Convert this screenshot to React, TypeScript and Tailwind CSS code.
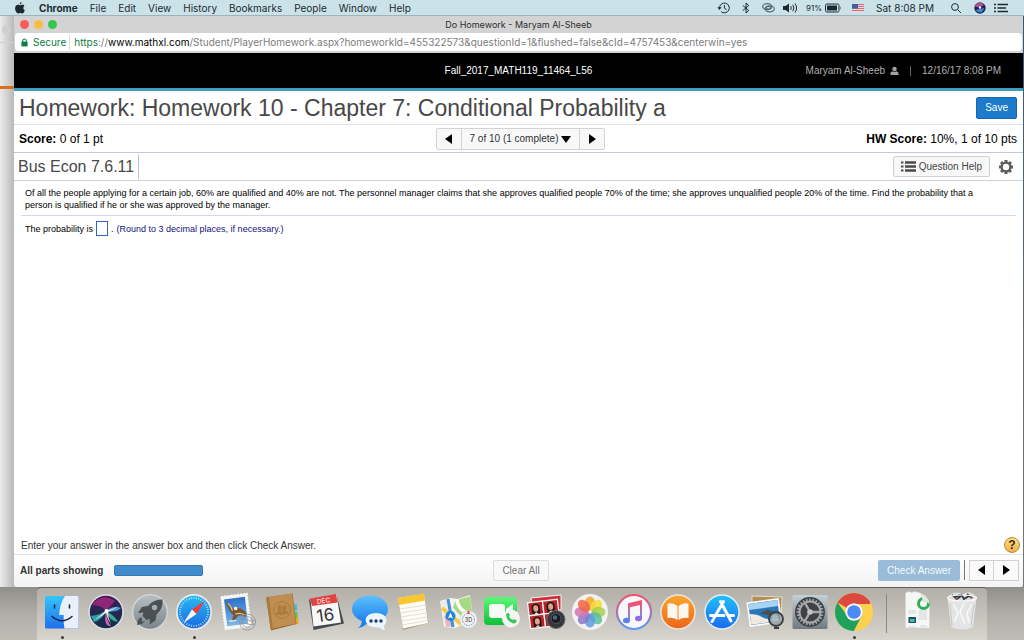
import type { ReactNode } from "react";

const menus = ["File", "Edit", "View", "History", "Bookmarks", "People", "Window", "Help"];

function AppleLogo() {
  return (
    <svg viewBox="0 0 20 24" className="h-3 w-[10px] fill-[#1d2b30]" aria-hidden="true">
      <path d="M13.2 0c.2 2.2-1.700 4.700-3.900 4.800C9 2.600 11.200.3 13.200 0zM18.900 8.200c-3.300 2-2.900 6.700.8 8.200-.9 2.600-3 6.600-5.200 6.600-1.500 0-2.200-1-4-1s-2.600 1-4 1C3.500 23-.2 16.500.2 11.800c.4-4 3.100-6.200 5.800-6.200 1.800 0 3 1.100 4.400 1.100 1.300 0 2.600-1.300 4.900-1.200 1.500.1 2.800.9 3.600 2.700z" />
    </svg>
  );
}

function MenuBar() {
  return (
    <header className="flex h-4 items-center justify-between border-b border-[#9fb4ba] bg-[#cbe2e9] pr-4 pl-[15px] font-['Inter',sans-serif] text-[10px] leading-[14px] text-[#1b2a30]">
      <nav className="flex items-center gap-3">
        <a href="#apple" aria-label="Apple" className="pr-[2px]">
          <AppleLogo />
        </a>
        <a href="#chrome" className="font-bold">Chrome</a>
        {menus.map((m) => (
          <a key={m} href={"#" + m.toLowerCase()}>{m}</a>
        ))}
      </nav>
      <div className="flex items-center">
        <svg viewBox="0 0 13 12" className="mr-3 h-3 w-[13px] fill-none stroke-[#1d2b30]" aria-hidden="true">
          <path d="M2.500 6a4.900 4.900 0 1 1 1.600 3.600M7.400 3v3.200l2.200 1.500" />
          <path d="M.3 5.200h4.300L2.500 8z" className="fill-[#1d2b30] stroke-none" />
        </svg>
        <svg viewBox="0 0 8 12" className="mr-3 h-3 w-2 fill-none stroke-[#1d2b30]" aria-hidden="true">
          <path d="M.8 3.500l6 5L4 11V1l2.800 2.500-6 5" />
        </svg>
        <svg viewBox="0 0 13 12" className="mr-2 h-3 w-[13px] fill-none stroke-[#5b6c72]" strokeWidth="1.200" aria-hidden="true">
          <ellipse cx="5.300" cy="4.600" rx="4.600" ry="3" />
          <ellipse cx="7.700" cy="6.800" rx="4.600" ry="3" />
          <ellipse cx="6.500" cy="5.700" rx="2.500" ry="1.400" />
        </svg>
        <svg viewBox="0 0 15 12" className="mr-2 h-3 w-[15px]" aria-hidden="true">
          <path d="M0 4h2.500L6 1.500v9L2.500 8H0z" className="fill-[#1d2b30]" />
          <path d="M7.700 4.200q1.200 1.800 0 3.600M9.800 2.800q2.200 3.200 0 6.400M12 1.500q3.200 4.500 0 9" className="fill-none stroke-[#1d2b30]" />
        </svg>
        <span className="mr-[3px] text-[8px]">91%</span>
        <svg viewBox="0 0 17 10" className="mr-[10px] h-[10px] w-[17px]" aria-hidden="true">
          <rect x=".5" y="1" width="13.500" height="8" rx="1.500" className="fill-none stroke-[#1d2b30]" />
          <rect x="2" y="2.500" width="10" height="5" className="fill-[#1d2b30]" />
          <path d="M15 3.500q1.500 1.500 0 3z" className="fill-[#1d2b30]" />
        </svg>
        <svg viewBox="0 0 12 8" className="mr-3 h-2 w-3" aria-hidden="true">
          <rect width="12" height="8" fill="#eadbe0" />
          <path d="M0 .5h12M0 2.500h12M0 4.500h12M0 6.500h12" stroke="#c86a78" />
          <rect width="6" height="4.500" fill="#42609b" />
        </svg>
        <span className="mr-4">Sat 8:08 PM</span>
        <svg viewBox="0 0 12 12" className="mr-3 h-3 w-3 fill-none stroke-[#1d2b30]" aria-hidden="true">
          <circle cx="5" cy="5" r="3.400" />
          <path d="M7.500 7.500l3.500 3.500" />
        </svg>
        <svg viewBox="0 0 12 12" className="mr-2 h-3 w-3" aria-hidden="true">
          <circle cx="6" cy="6" r="5.700" fill="#252250" />
          <path d="M1 5a5 5 0 0 1 9-2L6 5z" fill="#b34c9c" />
          <path d="M1.500 8q4-1 9-2l-3 4.500q-4 0-6-2.500z" fill="#3b8bd0" />
          <circle cx="6" cy="5.500" r="1.200" fill="#fff" />
        </svg>
        <svg viewBox="0 0 14 10" className="h-[10px] w-[14px] stroke-[#1d2b30]" strokeWidth="1.500" aria-hidden="true">
          <path d="M0 1.500h2M3.500 1.500H14M0 5h2M3.500 5H12M0 8.500h2M3.500 8.500H14" />
        </svg>
      </div>
    </header>
  );
}

function Triangle({ dir }: { dir: "left" | "right" | "down" }) {
  const d = dir === "left" ? "M8 0v10L1 5z" : dir === "right" ? "M2 0v10l7-5z" : "M0 2h10L5 9z";
  return (
    <svg viewBox="0 0 10 10" className="h-[10px] w-[10px] shrink-0 fill-black" aria-hidden="true">
      <path d={d} />
    </svg>
  );
}

function Gear() {
  return (
    <svg viewBox="0 0 16 16" className="h-4 w-4" aria-hidden="true">
      <g stroke="#5d5d5d" fill="none">
        <circle cx="8" cy="8" r="4.400" strokeWidth="2.400" />
        <path
          d="M8 1v2M8 13v2M1 8h2M13 8h2M3.050 3.050l1.400 1.400M11.550 11.550l1.400 1.400M3.050 12.950l1.400-1.400M11.550 4.450l1.400-1.400"
          strokeWidth="3"
        />
      </g>
    </svg>
  );
}

function BrowserChrome() {
  return (
    <div className="bg-[#d3d3d3] pb-[2px] font-['Inter',sans-serif] text-[10px]">
      <div className="grid h-[17px] grid-cols-[1fr_auto_1fr] items-center px-[6px]">
        <div className="flex gap-[5px]">
          <button aria-label="Close" className="h-[9px] w-[9px] rounded-full bg-[#fc5b57]" />
          <button aria-label="Minimize" className="h-[9px] w-[9px] rounded-full bg-[#fdbc40]" />
          <button aria-label="Zoom" className="h-[9px] w-[9px] rounded-full bg-[#34c84a]" />
        </div>
        <p className="text-[9px] text-[#2d2d2d]">Do Homework - Maryam Al-Sheeb</p>
      </div>
      <div className="mx-px flex h-[18px] items-center rounded-sm bg-white pl-[6px] text-[#7c7c7c]">
        <svg viewBox="0 0 8 10" className="mr-[5px] h-[9px] w-[7px]" aria-hidden="true">
          <rect x=".5" y="4" width="7" height="5.500" fill="#0b8043" />
          <path d="M2 4.500V3a2 2 0 0 1 4 0v1.500" fill="none" stroke="#0b8043" strokeWidth="1.200" />
        </svg>
        <span className="mr-1 border-r border-[#dadada] pr-[3px] text-[#0b8043]">Secure</span>
        <span className="truncate">
          <span className="text-[#0b8043]">https</span>://<span className="text-black">www.mathxl.com</span>
          /Student/PlayerHomework.aspx?homeworkId=455322573&amp;questionId=1&amp;flushed=false&amp;cId=4757453&amp;centerwin=yes
        </span>
      </div>
    </div>
  );
}

function CourseBar() {
  return (
    <div className="grid h-[38px] grid-cols-[1fr_auto_1fr] items-center border-b-[3px] border-[#3f9dc0] bg-black pr-[22px] pl-[22px] text-[10px]">
      <span />
      <p className="text-white">Fall_2017_MATH119_11464_L56</p>
      <div className="flex items-center justify-end text-[#b0b0b0]">
        <span>Maryam Al-Sheeb</span>
        <svg viewBox="0 0 10 10" className="ml-[5px] h-[10px] w-[9px] fill-[#a3a3a3]" aria-hidden="true">
          <circle cx="5" cy="2.700" r="2.500" />
          <path d="M.5 9.500V7.500Q.8 5.500 3 5.200q2 1.300 4 0 2.200.3 2.500 2.300v2z" />
        </svg>
        <span className="mx-[11px] h-[10px] w-px bg-[#6a6158]" />
        <time>12/16/17 8:08 PM</time>
      </div>
    </div>
  );
}

function Homework() {
  return (
    <main className="flex flex-1 flex-col bg-white">
      <div className="flex h-[34px] items-center justify-between border-b border-[#dfe0e8] pr-[6px] pl-[5px]">
        <h1 className="text-[23px] leading-[30px] whitespace-nowrap text-[#484848]">
          Homework: Homework 10 - Chapter 7: Conditional Probability a
        </h1>
        <button className="h-[22px] rounded-xs border border-[#1767ae] bg-[#1c7bcb] px-2 text-[10px] leading-[18px] text-white">
          Save
        </button>
      </div>

      <div className="grid h-7 grid-cols-[1fr_auto_1fr] items-center border-b border-[#c3c7d8] pr-px pl-[5px] text-[12px]">
        <p>
          <b>Score:</b> 0 of 1 pt
        </p>
        <div className="flex h-[22px] items-stretch rounded-xs border border-[#d3d3d3] bg-[#f8f8f8] text-[10px] text-[#333]">
          <button aria-label="Previous question" className="flex w-6 items-center justify-center">
            <Triangle dir="left" />
          </button>
          <button className="flex items-center gap-[3px] border-x border-[#d3d3d3] px-2">
            7 of 10 (1 complete)
            <Triangle dir="down" />
          </button>
          <button aria-label="Next question" className="flex w-6 items-center justify-center">
            <Triangle dir="right" />
          </button>
        </div>
        <p className="pr-[5px] text-right">
          <b>HW Score:</b> 10%, 1 of 10 pts
        </p>
      </div>

      <div className="flex h-7 items-center justify-between border-b border-[#cdcfe0] pr-[9px] pl-1">
        <h2 className="border-r border-[#bdc2d4] pr-1 text-[16px] leading-[25px] text-[#484848]">Bus Econ 7.6.11</h2>
        <div className="flex items-center gap-2">
          <button className="flex h-[21px] items-center gap-[3px] rounded-xs border border-[#cfcfcf] bg-[#f8f8f8] px-[7px] text-[10px] text-[#444]">
            <svg viewBox="0 0 15 11" className="h-[11px] w-[15px] stroke-[#4a4a4a]" aria-hidden="true">
              <path d="M0 1.500h2.500M0 5.500h2.500M0 9.500h2.500" strokeWidth="2" />
              <path d="M4 1.500h11M4 5.500h11M4 9.500h11" strokeWidth="2.600" />
            </svg>
            Question Help
          </button>
          <button aria-label="Settings">
            <Gear />
          </button>
        </div>
      </div>

      <section className="px-[7px] text-[9px] leading-3 text-black">
        <p className="border-b border-[#d6d8e6] pt-[6px] pr-4 pb-1 pl-1">
          Of all the people applying for a certain job, 60% are qualified and 40% are not. The personnel manager claims
          that she approves qualified people 70% of the time; she approves unqualified people 20% of the time. Find the
          probability that a person is qualified if he or she was approved by the manager.
        </p>
        <div className="flex items-center px-1 pt-[5px]">
          <label htmlFor="answer">The probability is</label>
          <input id="answer" type="text" className="mx-[3px] h-[15px] w-3 border border-[#2f66c4] bg-white" />
          <span>.</span>
          <span className="ml-[3px] text-[#12127c]">(Round to 3 decimal places, if necessary.)</span>
        </div>
      </section>

      <div className="mt-auto flex h-[21px] items-center justify-between border-b border-[#e3e3ec] pt-[2px] pr-[3px] pl-[7px] text-[10px] text-[#333]">
        <p>Enter your answer in the answer box and then click Check Answer.</p>
        <button
          aria-label="Help"
          className="flex h-4 w-4 items-center justify-center rounded-full border border-[#b58a35] bg-linear-to-b from-[#ffe08a] to-[#efb043] text-[12px] leading-3 font-bold text-[#3a2a10]"
        >
          ?
        </button>
      </div>

      <footer className="grid h-8 grid-cols-[1fr_auto_1fr] items-center bg-linear-to-b from-white to-[#f3f3f3] pr-px pb-[2px] pl-[6px] text-[10px]">
        <div className="flex items-center gap-[11px]">
          <b className="text-[#333]">All parts showing</b>
          <div role="progressbar" aria-label="Progress" className="h-[11px] w-[89px] rounded-xs border border-[#3478b8] bg-[#428bca]" />
        </div>
        <button className="h-[21px] rounded-xs border border-[#dcdcdc] bg-[#f8f8f8] px-2 text-[#757575]">Clear All</button>
        <div className="flex items-center justify-end pr-[3px]">
          <button className="h-[21px] rounded-xs bg-[#9abcd8] px-[9px] text-[#f4f9fc]">Check Answer</button>
          <span className="mx-1 h-5 w-px bg-[#777]" />
          <div className="flex h-[21px] border border-[#d0d0d0] bg-[#fafafa]">
            <button aria-label="Previous part" className="flex w-6 items-center justify-center border-r border-[#d0d0d0]">
              <Triangle dir="left" />
            </button>
            <button aria-label="Next part" className="flex w-6 items-center justify-center">
              <Triangle dir="right" />
            </button>
          </div>
        </div>
      </footer>
    </main>
  );
}

const petals = ["#f7a528", "#f4dc3a", "#a8cf4a", "#5bbf9a", "#5a9fe0", "#8a78cc", "#cf78b4", "#f0654a"];
const teeth = Array.from({ length: 24 }, (_, i) => i * 15);
const ticks = Array.from({ length: 36 }, (_, i) => i * 10);

const dockApps: { name: string; running?: boolean; art: ReactNode }[] = [
  {
    name: "Finder",
    running: true,
    art: (
      <>
        <rect x="5" y="6" width="33.500" height="32.500" rx="1.500" fill="url(#finderBlue)" />
        <path d="M25 6h12q1.500 0 1.500 1.500V37q0 1.500-1.500 1.500H24.500q-1-4.500-.8-9.500v-4h-4.500Q19.500 14 25 6z" fill="#e9f0f8" />
        <path d="M14.500 15v3M29.500 15v3" stroke="#132743" strokeWidth="1.500" strokeLinecap="round" />
        <path d="M12 26.500q10 8.500 20 0" fill="none" stroke="#132743" strokeWidth="1.500" strokeLinecap="round" />
      </>
    ),
  },
  {
    name: "Siri",
    art: (
      <>
        <circle cx="22" cy="22" r="17.800" fill="#dcdbe2" />
        <circle cx="22" cy="22" r="16.200" fill="url(#siriBg)" />
        <path d="M8 15Q18 2 31 11L22 21Q18 15 8 15z" fill="#a9277e" opacity=".8" />
        <path d="M7 26q9-1 15-5-4 9-12 11z" fill="#2fb8b0" opacity=".85" />
        <path d="M22 21q7-6 15-3-5 5-15 3z" fill="#56b5e8" opacity=".85" />
        <path d="M22 21q8 4 12 11-9-1-12-11z" fill="#41c9a8" opacity=".8" />
        <path d="M22 21q0 9 5 15-8 1-5-15z" fill="#ea6cb7" opacity=".9" />
        <path d="M7 23q9 2 15-2 7-2 13-5-8 5-11 6 0 6 3 12-4-5-5-11-7 5-12 7 6-4 10-8-6 3-13 1z" fill="#fff" opacity=".8" />
        <circle cx="22.500" cy="21" r="2" fill="#fff" />
      </>
    ),
  },
  {
    name: "Launchpad",
    art: (
      <>
        <circle cx="22" cy="22" r="18" fill="#d4d8da" />
        <circle cx="22" cy="22" r="16.700" fill="url(#rocketBg)" />
        <path d="M34.500 9.500q-9-.5-14.500 6.500l-6 1-4 6 5.500-.5-1 3.500 4 4 3.500-1-.5 5.500 6-4 1-6q7-6 6-15z" fill="#4b5053" />
        <circle cx="26.500" cy="17.500" r="2.700" fill="#a4adb1" />
        <path d="M13.500 27q-4 1-4.500 8 6-.5 8-4.500l-3 1.500z" fill="#4b5053" />
      </>
    ),
  },
  {
    name: "Safari",
    running: true,
    art: (
      <>
        <circle cx="22" cy="22" r="18" fill="#e7e9ec" />
        <circle cx="22" cy="22" r="16.300" fill="url(#safariBg)" />
        {ticks.map((a) => (
          <path key={a} d="M22 7v2" stroke="#d9f0fc" strokeWidth=".7" transform={`rotate(${a} 22 22)`} />
        ))}
        <path d="M33 10.500L24.500 24l-4.500-4.500z" fill="#ef3e36" />
        <path d="M11.500 33L20 19.500l4.500 4.500z" fill="#f5f5f5" />
      </>
    ),
  },
  {
    name: "Mail",
    art: (
      <>
        <g transform="rotate(-7 20 21)">
          <rect x="7" y="5" width="26" height="33" fill="#f5f5f4" stroke="#fbfbfb" strokeDasharray="2 1.200" strokeWidth="1.500" />
          <rect x="9.500" y="8" width="21" height="27" fill="url(#skyBg)" />
          <path d="M11.500 11q4 2 5 8 2-2 5-1 5 1 8.500 6l-1.500 4q-4-3-7-2-2 3-6 5-1-3 1.500-6-5-5-5.500-14z" fill="#7a5530" />
          <path d="M13 12.500q3 4 3.500 8M19 24q5-1 9 2" stroke="#dcc59c" strokeWidth="1.200" fill="none" />
          <circle cx="20" cy="18.500" r="1.800" fill="#f6efe2" />
          <path d="M12 30q4 1 7 0" stroke="#f2f2ee" strokeWidth="1.500" />
        </g>
        <g fill="none" stroke="#8c8c8c" opacity=".75">
          <circle cx="31.500" cy="32" r="8" />
          <circle cx="31.500" cy="32" r="5.300" />
          <path d="M24 30q4-2 8 0t7 0M24 34q4-2 8 0t7 0" />
        </g>
      </>
    ),
  },
  {
    name: "Contacts",
    art: (
      <>
        <path d="M34 14l3 .5v6l-3 .3z" fill="#49b7d6" />
        <path d="M34 22l3.500 0v6l-3 .5z" fill="#56c256" />
        <path d="M34.500 28.500l4-.5v6l-4 .5z" fill="#f0a52c" />
        <path d="M6 7.500L32.500 3.500l4 30.500L11 40.500z" fill="#99692e" />
        <path d="M6.500 7L32 3.500l4 30-25.500 5.500z" fill="#c08f50" />
        <path d="M6.500 7l2.500-.4 4 31.900-2.500.5z" fill="#aa7a3d" />
        <circle cx="22" cy="20" r="8.500" fill="none" stroke="#a87a3f" />
        <path d="M16 25q0-3 2.500-4-2.500-5 1-6 4 .5 1.500 6 3 1 3 4zM22 24q0-2 1-3-2-5 1.500-6 3.500 1 1 5.500 3 1 3 3.500z" fill="#ab7c41" />
      </>
    ),
  },
  {
    name: "Calendar",
    art: (
      <>
        <path d="M5 9.500L32.500 5l7.500 28.500L9.500 40z" fill="#454a50" />
        <path d="M6.500 9l26-4.500L37 32.500 9.500 36.500z" fill="#f8f8f8" />
        <path d="M6 8.500L32 4l1.500 8.500L8 16z" fill="#e24440" />
        <g transform="rotate(-8 21 22)" textAnchor="middle" className="font-['Inter',sans-serif]">
          <text x="21" y="13" fontSize="6.500" fill="#fff">DEC</text>
          <text x="21" y="31" fontSize="17" fill="#333">16</text>
        </g>
      </>
    ),
  },
  {
    name: "Messages",
    art: (
      <>
        <ellipse cx="22" cy="19" rx="18" ry="13.500" fill="url(#bubble)" />
        <path d="M14 30q0 5-4 8 7-1 10-6z" fill="#1c83ea" />
        <path d="M28 23q10 0 10.500 7.500-.5 4-3 5.500.5 3 2 4-3.500 0-6-2.500Q18 38 17.500 30 18.500 23 28 23z" fill="#edf5fc" />
        <circle cx="23" cy="31" r="1.700" fill="#1d3f78" />
        <circle cx="28" cy="31" r="1.700" fill="#1d3f78" />
        <circle cx="33" cy="31" r="1.700" fill="#1d3f78" />
      </>
    ),
  },
  {
    name: "Notes",
    art: (
      <>
        <path d="M6 8.500L32 4l4.500 29L11 40z" fill="#ad9d78" />
        <path d="M6 8L32 4l4 29-25 5.500z" fill="#fdfcf5" />
        <path d="M6 8L32 3.500l1 7-26 4.500z" fill="#f8c72f" />
        <path d="M7.500 19l26-4M8 23l26-4M8.500 27l26-4M9.500 31l25.500-4M10 35l25.500-4.500" stroke="#dcd9ce" strokeWidth=".8" />
      </>
    ),
  },
  {
    name: "Maps",
    art: (
      <>
        <path d="M4 11l10-3 8 1 12-4 4 29-11 1-8 3-11-1z" fill="#f5f2e9" />
        <path d="M5 12l9-2.500L16 23l-9 3z" fill="#e9ecee" />
        <path d="M20 10l14-3.500 3 23-11-2-9-10z" fill="#a5d982" />
        <path d="M21 9q1 13 16 15" stroke="#f8f8f4" strokeWidth="3.500" fill="none" />
        <path d="M6 18l19 16" stroke="#f3ca50" strokeWidth="4" />
        <path d="M8 26l8 1 2 9-8 1z" fill="#f3b4c2" />
        <path d="M12 9l5 28" stroke="#3d91de" strokeWidth="3" />
        <circle cx="14.500" cy="26" r="5" fill="#1e86dc" />
        <path d="M14.500 22.500l2.500 6-2.500-1.200-2.500 1.200z" fill="#fff" />
        <circle cx="32.500" cy="29.500" r="8.700" fill="#f0f1f2" stroke="#c8c9cb" strokeWidth=".6" />
        <circle cx="32.500" cy="29.500" r="6" fill="none" stroke="#7e95a5" strokeDasharray="1.500 1" />
        <text x="32.500" y="31.500" fontSize="5.500" textAnchor="middle" fill="#333" className="font-['Inter',sans-serif]">3D</text>
        <path d="M31.500 21h2v3h-2z" fill="#e2443b" />
      </>
    ),
  },
  {
    name: "FaceTime",
    art: (
      <>
        <rect x="4" y="7" width="33" height="28" rx="4" fill="url(#green)" />
        <rect x="9" y="14" width="16" height="14" rx="3" fill="#f7fbf7" />
        <path d="M26 19l7-5v13l-7-4z" fill="#f7fbf7" />
        <circle cx="31" cy="28.500" r="9" fill="#f3f4f3" />
        <path d="M26 24.500q2-3 4 .5-1.500 1.500 0 3t3 2q1.500-1.500 3.500.5 0 3-3 3-7-2-7.500-9z" fill="#37c858" />
      </>
    ),
  },
  {
    name: "Photo Booth",
    art: (
      <>
        <path d="M7 8l30-3v15H9z" fill="#cf2f35" stroke="#f5f3f0" />
        <g transform="rotate(-7 20 24)">
          {[0, 1].map((r) =>
            [0, 1].map((c) => (
              <g key={`${r}${c}`} transform={`translate(${5 + c * 15} ${11 + r * 13})`}>
                <rect width="15" height="13" fill="#b8252b" stroke="#f7f4f1" strokeWidth="1.300" />
                <path d="M3.500 12V4q4-5 8 0v8z" fill="#2a1718" />
                <ellipse cx="7.500" cy="6.500" rx="2.500" ry="3.200" fill="#dda58b" />
                <path d="M5.500 12q2-3 4 0z" fill="#eee" />
              </g>
            )),
          )}
        </g>
        <circle cx="32" cy="29.500" r="9" fill="#35373a" stroke="#6a6b6d" />
        <circle cx="32" cy="28.500" r="5" fill="#181a20" stroke="#55585f" />
        <circle cx="31" cy="27.500" r="2.200" fill="#526580" />
      </>
    ),
  },
  {
    name: "Photos",
    art: (
      <>
        <circle cx="22" cy="22" r="18" fill="#f3f2f0" />
        {petals.map((c, i) => (
          <ellipse key={c} cx="22" cy="13.500" rx="5.200" ry="7" fill={c} opacity=".85" transform={`rotate(${i * 45} 22 22)`} />
        ))}
      </>
    ),
  },
  {
    name: "iTunes",
    art: (
      <>
        <circle cx="22" cy="22" r="17" fill="#f8f8fb" stroke="url(#tunes)" strokeWidth="2.200" />
        <path d="M17 30.500V14l12-2.700V28.500" fill="none" stroke="url(#tunes)" strokeWidth="2" />
        <path d="M17 14l12-2.700v3.500l-12 2.700z" fill="#ee5474" />
        <ellipse cx="14.500" cy="30.500" rx="3.500" ry="2.800" fill="#5f7fe8" />
        <ellipse cx="26.500" cy="28.500" rx="3.500" ry="2.800" fill="#8f6fdd" />
      </>
    ),
  },
  {
    name: "iBooks",
    art: (
      <>
        <circle cx="22" cy="22" r="17.800" fill="#efe6da" />
        <circle cx="22" cy="22" r="16.300" fill="url(#orange)" />
        <path d="M21.500 16q-4-3.500-10-2.500v14.500q6-1 10 2zM22.500 16q4-3.500 10-2.500v14.500q-6-1-10 2z" fill="#fbf6ee" />
      </>
    ),
  },
  {
    name: "App Store",
    art: (
      <>
        <circle cx="22" cy="22" r="17.800" fill="#e8edf2" />
        <circle cx="22" cy="22" r="16.300" fill="url(#store)" />
        <path d="M23.500 11.500L14 28M20.500 11.500L31 31M10.500 25.500H24M28.500 25.500h5M13 30l-1 1.500" fill="none" stroke="#fff" strokeWidth="3" strokeLinecap="round" />
      </>
    ),
  },
  {
    name: "Preview",
    art: (
      <>
        <path d="M8 6l30 1-1 24-29-1z" fill="#b28e55" stroke="#e8decb" />
        <g transform="rotate(-8 20 24)">
          <rect x="5" y="11" width="31" height="23" fill="#2b74b7" stroke="#fafafa" strokeWidth="1.800" />
          <rect x="6" y="12" width="29" height="6" fill="#a8d3f1" />
          <path d="M6 22q7 1 12 5t17 4v2H6z" fill="#efe9df" />
          <path d="M16 23l8-3 6 4-5 2z" fill="#49504e" />
        </g>
        <circle cx="32" cy="29" r="7" fill="#8e9a9f" fillOpacity=".8" stroke="#3b3f41" strokeWidth="1.800" />
        <circle cx="31" cy="28" r="3.500" fill="#c6ced0" opacity=".6" />
        <path d="M30 37h5v2h-5z" fill="#3b3f41" />
      </>
    ),
  },
  {
    name: "System Preferences",
    art: (
      <>
        <rect x="4.500" y="5" width="35" height="34" rx="1.500" fill="url(#steel)" />
        <circle cx="22" cy="22" r="15" fill="#3f4245" />
        {teeth.map((a) => (
          <path key={a} d="M22 8.500v3" stroke="#a5a9ab" strokeWidth="1.500" transform={`rotate(${a} 22 22)`} />
        ))}
        <circle cx="22" cy="22" r="10.500" fill="none" stroke="#a5a9ab" strokeWidth="2" />
        <path d="M22 22h10M22 22l-5-9M22 22l-5 9" stroke="#a5a9ab" strokeWidth="2.300" />
        <circle cx="22" cy="22" r="2.800" fill="#c0c3c5" />
      </>
    ),
  },
  {
    name: "Google Chrome",
    running: true,
    art: (
      <>
        <circle cx="22" cy="22" r="19" fill="#fdd04f" />
        <path d="M22 22L5.550 12.500A19 19 0 0 1 38.450 12.500L38 14H22z" fill="#dc4a3f" />
        <path d="M5.550 12.500A19 19 0 0 0 22 41L30 26 22 22 14 24z" fill="#1fa15e" />
        <path d="M22 41A19 19 0 0 0 38.450 12.500L38 14H22L29.500 26z" fill="#fdd04f" />
        <circle cx="22" cy="22" r="8.700" fill="#f4f4f4" />
        <circle cx="22" cy="22" r="6.800" fill="#4c8bf5" />
      </>
    ),
  },
];

const dockFiles: { name: string; art: ReactNode }[] = [
  {
    name: "Document",
    art: (
      <>
        <path d="M9.500 3l3-1.500 3 1 3-1 6 1.500 9 10v25h-24z" fill="#f7f7f7" stroke="#d3d3d0" strokeWidth=".6" />
        <circle cx="27.500" cy="13.500" r="5" fill="none" stroke="#2fae56" strokeWidth="3" />
        <path d="M24 3q9 3 10 11-4-3-8-2 1-5-2-9z" fill="#e2e2e0" />
        <path d="M12 21h8M12 23h8M22.500 21H31M22.500 23H31M22.500 25H31M22.500 27H31M22.500 29H31M12 37h8M24 36h7" stroke="#c3c5c5" strokeWidth=".7" />
        <rect x="12.500" y="27" width="7.500" height="6" fill="#1e5363" />
        <rect x="14" y="29" width="4.500" height="3" fill="#41bcae" />
      </>
    ),
  },
  {
    name: "Trash",
    art: (
      <>
        <path d="M7.500 7l5-4 6-.5 4 1.500 6-2 5 2 3 4-2 4H9z" fill="#dadbdc" />
        <path d="M7.500 8q14.500 5 29 0L33 37q-11 5-22 0z" fill="#e6e7e8" fillOpacity=".92" />
        <path d="M12 5l5 4 4-3M21 4l3 5 5-3M27 4l5 4M15 7l5-2" stroke="#30343e" strokeWidth="1.700" fill="none" />
        <path d="M15 9l3-1M30 8l3-1" stroke="#be3c3c" strokeWidth="1.300" />
        <ellipse cx="22" cy="8" rx="14.500" ry="3" fill="none" stroke="#f8f8f8" strokeWidth="1.200" />
        <path d="M13 14l5 8-3 9M24 13l-4 9 5 12M32 14l-5 9 2 10" fill="none" stroke="#f8f9f9" strokeWidth="1.500" />
        <path d="M10 14l2 22M34 14l-3 22" stroke="#c6c8ca" />
      </>
    ),
  },
];

function Gradients() {
  const v: [string, string, string][] = [
    ["finderBlue", "#35c5fb", "#1f6fee"],
    ["siriBg", "#3b1d55", "#12304d"],
    ["rocketBg", "#b6bfc3", "#7c868a"],
    ["safariBg", "#27b9f5", "#1b6be0"],
    ["skyBg", "#2f72c8", "#7ab7ea"],
    ["bubble", "#5cc2fa", "#1d7eec"],
    ["green", "#5df777", "#0fc03a"],
    ["tunes", "#f4506d", "#5b9cf5"],
    ["orange", "#fba52c", "#ec661c"],
    ["store", "#1fc0fb", "#1c6cf0"],
    ["steel", "#c3d0d8", "#6f7a82"],
  ];
  return (
    <svg className="absolute h-0 w-0" aria-hidden="true">
      <defs>
        {v.map(([id, a, b]) => (
          <linearGradient key={id} id={id} x1="0" y1="0" x2="0" y2="1">
            <stop offset="0" stopColor={a} />
            <stop offset="1" stopColor={b} />
          </linearGradient>
        ))}
      </defs>
    </svg>
  );
}

function DockItem({ name, running, art }: { name: string; running?: boolean; art: ReactNode }) {
  return (
    <button aria-label={name} className="flex w-11 flex-col items-center gap-[2px]">
      <svg viewBox="0 0 44 44" className="h-11 w-11" aria-hidden="true">
        {art}
      </svg>
      {running && <span className="h-[3px] w-[3px] rounded-full bg-[#3c3a38]" />}
    </button>
  );
}

function Dock() {
  return (
    <div className="flex justify-center bg-linear-to-b from-[#8f8e8a] via-[#b0aea8] to-[#bfbdb6]">
      <div className="flex h-[53px] items-start rounded-t border-t border-[#5f5e5a] bg-linear-to-b from-[#b2afa9] to-[#d8d5cf] px-[3px] pt-[2px]">
        {dockApps.map((a) => (
          <DockItem key={a.name} {...a} />
        ))}
        <div className="flex w-5 justify-center pt-1">
          <span className="h-[39px] w-px bg-[#8b8883]" />
        </div>
        {dockFiles.map((a) => (
          <DockItem key={a.name} {...a} />
        ))}
      </div>
    </div>
  );
}

export default function App() {
  return (
    <div className="flex min-h-screen flex-col bg-[#bbb9b3]">
      <Gradients />
      <MenuBar />
      <div className="flex flex-1">
        <aside className="w-[14px] shrink-0 bg-linear-to-r from-[#ebebeb] to-[#b9b9b9]">
          <div className="h-[27px] border-b border-[#d0d0d0] pt-[9px] pl-[2px]">
            <div className="h-[9px] w-[9px] rounded-full bg-[#cfcfcf]" />
          </div>
          <div className="h-[43px]" />
          <div className="h-[3px] bg-[#d9701e]" />
        </aside>
        <div className="flex min-w-0 flex-1 flex-col overflow-hidden rounded-b bg-white font-['Liberation_Sans',Arial,sans-serif]">
          <BrowserChrome />
          <CourseBar />
          <Homework />
        </div>
        <div className="w-px shrink-0 bg-linear-to-b from-[#36596a] to-[#77777a]" />
      </div>
      <Dock />
    </div>
  );
}
